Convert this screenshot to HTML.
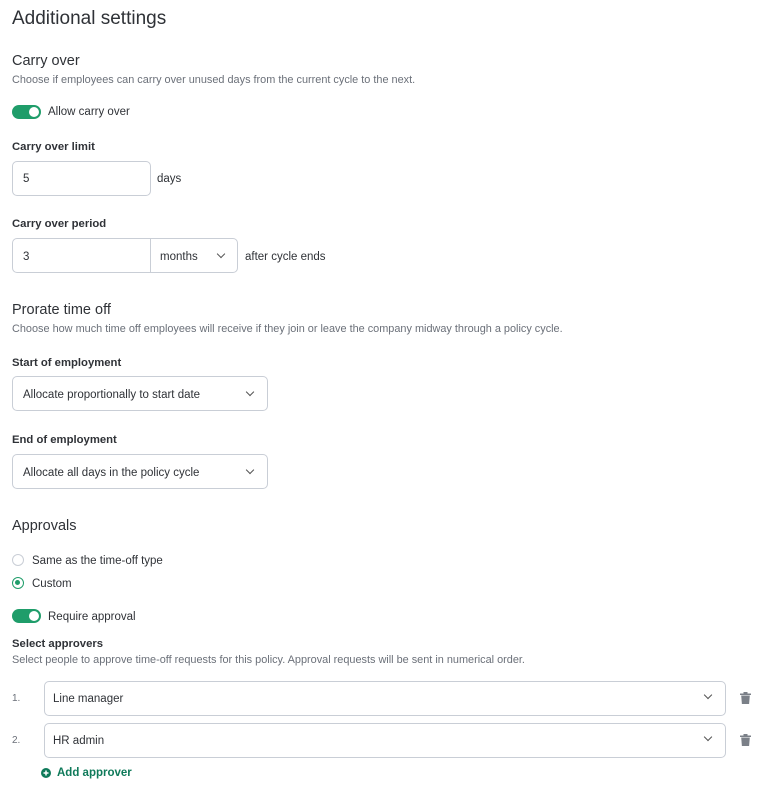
<!DOCTYPE html>
<html><head><style>
*{box-sizing:border-box;margin:0;padding:0}
body{width:768px;height:791px;background:#fff;font-family:"Liberation Sans",sans-serif;color:#2b2f36;position:relative;overflow:hidden}
.a{position:absolute;white-space:nowrap}
.h1{font-size:19px;color:#2f3237;left:12px;top:8px}
.h2{font-size:14.5px;color:#2f3237;left:12px}
.d{font-size:10.9px;color:#6b7079;left:12px}
.l{font-size:11.3px;font-weight:bold;color:#2f3237;left:12px}
.t{font-size:11.5px;color:#2f3237}
.box{position:absolute;border:1px solid #c9ced6;border-radius:5px;background:#fff}
.tg{position:absolute;left:12px;width:29px;height:14px;border-radius:7px;background:#1f9d6a}
.tg::after{content:"";position:absolute;right:2px;top:2px;width:10px;height:10px;border-radius:50%;background:#fff}
.chev{position:absolute;width:6px;height:6px;border-right:1.5px solid #555;border-bottom:1.5px solid #555;transform:rotate(45deg)}
.trash{position:absolute;left:740px;width:11px;height:12px}
</style></head><body>
<div class="a h1">Additional settings</div>
<div class="a h2" style="top:53px">Carry over</div>
<div class="a d" style="top:74px">Choose if employees can carry over unused days from the current cycle to the next.</div>
<div class="tg" style="top:105px"></div>
<div class="a t" style="left:48px;top:106px">Allow carry over</div>
<div class="a l" style="top:141px">Carry over limit</div>
<div class="box" style="left:12px;top:161px;width:139px;height:35px"></div>
<div class="a t" style="left:23px;top:173px">5</div>
<div class="a t" style="left:157px;top:173px">days</div>
<div class="a l" style="top:218px">Carry over period</div>
<div class="box" style="left:12px;top:238px;width:226px;height:35px"></div>
<div style="position:absolute;left:150px;top:239px;width:1px;height:33px;background:#c9ced6"></div>
<div class="a t" style="left:23px;top:251px">3</div>
<div class="a t" style="left:160px;top:251px">months</div>
<div class="chev" style="left:218px;top:251px"></div>
<div class="a t" style="left:245px;top:251px">after cycle ends</div>
<div class="a h2" style="top:302px">Prorate time off</div>
<div class="a d" style="top:323px">Choose how much time off employees will receive if they join or leave the company midway through a policy cycle.</div>
<div class="a l" style="top:357px">Start of employment</div>
<div class="box" style="left:12px;top:376px;width:256px;height:35px"></div>
<div class="a t" style="left:23px;top:389px">Allocate proportionally to start date</div>
<div class="chev" style="left:247px;top:389px"></div>
<div class="a l" style="top:434px">End of employment</div>
<div class="box" style="left:12px;top:454px;width:256px;height:35px"></div>
<div class="a t" style="left:23px;top:467px">Allocate all days in the policy cycle</div>
<div class="chev" style="left:247px;top:467px"></div>
<div class="a h2" style="top:518px">Approvals</div>
<div style="position:absolute;left:12px;top:554px;width:12px;height:12px;border:1px solid #c9ced6;border-radius:50%"></div>
<div class="a t" style="left:32px;top:555px">Same as the time-off type</div>
<div style="position:absolute;left:12px;top:577px;width:12px;height:12px;border:1.5px solid #1f9d6a;border-radius:50%"><div style="position:absolute;left:2px;top:2px;width:5px;height:5px;border-radius:50%;background:#1f9d6a"></div></div>
<div class="a t" style="left:32px;top:578px">Custom</div>
<div class="tg" style="top:609px"></div>
<div class="a t" style="left:48px;top:611px">Require approval</div>
<div class="a l" style="top:638px">Select approvers</div>
<div class="a d" style="top:654px">Select people to approve time-off requests for this policy. Approval requests will be sent in numerical order.</div>
<div class="a t" style="left:12px;top:693px;color:#6b7079;font-size:10px">1.</div>
<div class="box" style="left:44px;top:681px;width:682px;height:35px"></div>
<div class="a t" style="left:53px;top:693px">Line manager</div>
<div class="chev" style="left:705px;top:692px"></div>
<svg class="trash" style="top:692px" viewBox="0 0 11 12"><rect x="0" y="1.5" width="11" height="1.5" fill="#7b8088"/><rect x="3.5" y="0" width="4" height="2" fill="#7b8088"/><path d="M1.2 3.5h8.6l-.7 8.5H1.9z" fill="#7b8088"/></svg>
<div class="a t" style="left:12px;top:735px;color:#6b7079;font-size:10px">2.</div>
<div class="box" style="left:44px;top:723px;width:682px;height:35px"></div>
<div class="a t" style="left:53px;top:735px">HR admin</div>
<div class="chev" style="left:705px;top:734px"></div>
<svg class="trash" style="top:734px" viewBox="0 0 11 12"><rect x="0" y="1.5" width="11" height="1.5" fill="#7b8088"/><rect x="3.5" y="0" width="4" height="2" fill="#7b8088"/><path d="M1.2 3.5h8.6l-.7 8.5H1.9z" fill="#7b8088"/></svg>
<svg style="position:absolute;left:41px;top:768px" width="10" height="10" viewBox="0 0 10 10"><circle cx="5" cy="5" r="5" fill="#0f7a5a"/><path d="M5 2.5v5M2.5 5h5" stroke="#fff" stroke-width="1.5"/></svg>
<div class="a t" style="left:57px;top:767px;color:#0f7a5a;font-weight:bold">Add approver</div>
</body></html>
